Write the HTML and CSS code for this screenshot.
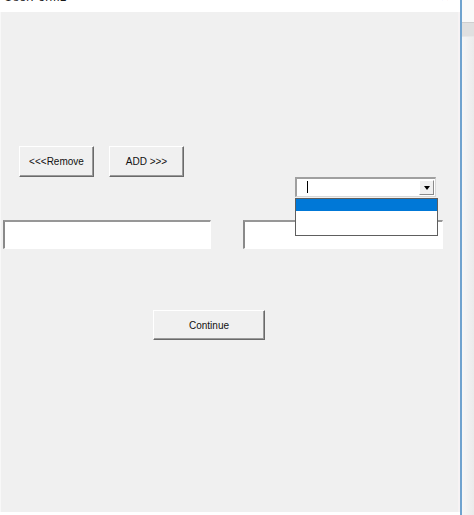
FILE: index.html
```html
<!DOCTYPE html>
<html>
<head>
<meta charset="utf-8">
<link rel="stylesheet" href="styles.css">
</head>
<body>
<div class="screen">
  <div class="window">
    <div class="titlebar">
      <span class="title">UserForm1</span>
      <span class="close">✕</span>
    </div>
    <div class="form">
      <div class="row buttons">
        <button class="btn btn-remove">&lt;&lt;&lt;Remove</button>
        <button class="btn btn-add">ADD &gt;&gt;&gt;</button>
      </div>
      <div class="row combo-row">
        <div class="combo">
          <div class="combo-field"><span class="caret"></span></div>
          <div class="combo-arrow"><span class="tri"></span></div>
          <ul class="dropdown">
            <li class="opt selected"></li>
            <li class="opt"></li>
          </ul>
        </div>
      </div>
      <div class="row fields">
        <div class="textbox textbox-left"></div>
        <div class="textbox textbox-right"></div>
      </div>
      <div class="row actions">
        <button class="btn btn-continue">Continue</button>
      </div>
    </div>
  </div>
  <div class="side">
    <div class="side-top"></div>
    <div class="side-band"></div>
    <div class="side-rest"></div>
  </div>
</div>
</body>
</html>
```

FILE: styles.css
```css
* { box-sizing: border-box; }
html, body { margin: 0; padding: 0; background: #ffffff; }
body { font-family: "Liberation Sans", Arial, sans-serif; }

.screen {
  display: flex;
  width: 474px;
  height: 515px;
  overflow: hidden;
}

.window {
  width: 460px;
  height: 515px;
  display: flex;
  flex-direction: column;
  background: #ffffff;
}

.titlebar {
  height: 12px;
  background: #ffffff;
  display: flex;
  justify-content: space-between;
  overflow: hidden;
  padding: 0 10px 0 4px;
}
.title {
  font-size: 12px;
  line-height: 14px;
  margin-top: -10px;
  color: #1a1a1a;
  letter-spacing: 0.3px;
}
.close {
  font-size: 12px;
  line-height: 14px;
  margin-top: -10px;
  color: #222;
}

.form {
  height: 500px;
  background: #f0f0f0;
  border-left: 1px solid #f8f8f8;
  border-right: 2px solid #f7f3f4;
  display: flex;
  flex-direction: column;
}

.row { display: flex; }

.btn {
  font-family: "Liberation Sans", Arial, sans-serif;
  font-size: 10px;
  color: #111;
  background: #f0f0f0;
  border: 1px solid;
  border-color: #ffffff #6a6a6a #6a6a6a #ffffff;
  box-shadow: inset -1px -1px 0 #9a9a9a;
  padding: 0;
  margin: 0;
  height: 31px;
}

.buttons {
  margin-top: 134px;
  margin-left: 18px;
  gap: 15px;
}
.btn-remove { width: 75px; }
.btn-add { width: 75px; }

.combo-row {
  margin-left: 294px;
}
.combo {
  position: relative;
  width: 141px;
  height: 20px;
  background: #ffffff;
  border-top: 2px solid #a0a0a0;
  border-left: 2px solid #a0a0a0;
  border-right: 1px solid #d8d8d8;
  border-bottom: 1px solid #d8d8d8;
  display: flex;
}
.combo-field {
  flex: 1;
  padding-left: 10px;
  padding-top: 2px;
}
.caret {
  display: block;
  width: 1px;
  height: 12px;
  background: #000;
}
.combo-arrow {
  width: 15px;
  margin: 1px 1px 1px 0;
  background: #f0f0f0;
  border: 1px solid;
  border-color: #ffffff #8a8a8a #8a8a8a #ffffff;
  display: flex;
  align-items: center;
  justify-content: center;
}
.tri {
  width: 0;
  height: 0;
  border-left: 3px solid transparent;
  border-right: 3px solid transparent;
  border-top: 4px solid #000;
  margin-top: 1px;
}

.dropdown {
  position: absolute;
  top: 19px;
  left: -2px;
  width: 143px;
  height: 38px;
  margin: 0;
  padding: 0;
  list-style: none;
  background: #ffffff;
  border: 1px solid #5e5e5e;
  z-index: 2;
}
.opt { height: 12px; }
.opt.selected { background: #0078d7; }

.fields {
  margin-top: 23px;
  margin-left: 2px;
  gap: 32px;
}
.textbox {
  height: 29px;
  background: #ffffff;
  border-top: 2px solid #979797;
  border-left: 2px solid #8a8a8a;
  border-right: 1px solid #ffffff;
  border-bottom: 1px solid #ffffff;
}
.textbox-left { width: 208px; }
.textbox-right { width: 200px; }

.actions {
  margin-top: 61px;
  margin-left: 152px;
}
.btn-continue { width: 112px; height: 30px; }

.side {
  width: 14px;
  height: 515px;
  border-left: 2px solid #6fa3cf;
  display: flex;
  flex-direction: column;
  background: linear-gradient(to right, #f6f6f6, #ebebeb);
}
.side-top { height: 22px; background: #fafafa; }
.side-band {
  height: 15px;
  background: #e0e0e0;
  border-top: 1px solid #cfcfcf;
  border-bottom: 1px solid #e8e8e8;
}
.side-rest { flex: 1; }
```
